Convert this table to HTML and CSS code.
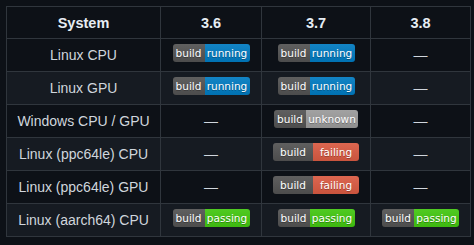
FILE: index.html
```html
<!DOCTYPE html>
<html>
<head>
<meta charset="utf-8">
<link rel="stylesheet" href="styles.css">
</head>
<body>
<table class="matrix">
  <colgroup>
    <col class="c-sys"><col class="c-36"><col class="c-37"><col class="c-38">
  </colgroup>
  <thead>
    <tr><th>System</th><th>3.6</th><th>3.7</th><th>3.8</th></tr>
  </thead>
  <tbody>
    <tr>
      <td>Linux CPU</td>
      <td><span class="badge"><span class="lbl">build</span><span class="val running">running</span></span></td>
      <td><span class="badge"><span class="lbl">build</span><span class="val running">running</span></span></td>
      <td class="dash">—</td>
    </tr>
    <tr>
      <td>Linux GPU</td>
      <td><span class="badge"><span class="lbl">build</span><span class="val running">running</span></span></td>
      <td><span class="badge"><span class="lbl">build</span><span class="val running">running</span></span></td>
      <td class="dash">—</td>
    </tr>
    <tr>
      <td>Windows CPU / GPU</td>
      <td class="dash">—</td>
      <td><span class="badge"><span class="lbl">build</span><span class="val unknown">unknown</span></span></td>
      <td class="dash">—</td>
    </tr>
    <tr>
      <td>Linux (ppc64le) CPU</td>
      <td class="dash">—</td>
      <td><span class="badge wide"><span class="lbl">build</span><span class="val failing">failing</span></span></td>
      <td class="dash">—</td>
    </tr>
    <tr>
      <td>Linux (ppc64le) GPU</td>
      <td class="dash">—</td>
      <td><span class="badge wide"><span class="lbl">build</span><span class="val failing">failing</span></span></td>
      <td class="dash">—</td>
    </tr>
    <tr>
      <td>Linux (aarch64) CPU</td>
      <td><span class="badge"><span class="lbl">build</span><span class="val passing">passing</span></span></td>
      <td><span class="badge"><span class="lbl">build</span><span class="val passing">passing</span></span></td>
      <td><span class="badge"><span class="lbl">build</span><span class="val passing">passing</span></span></td>
    </tr>
  </tbody>
</table>
</body>
</html>
```
FILE: styles.css
```css
html, body {
  margin: 0;
  background: #0d1117;
}
body {
  padding: 6px 4px 0 6px;
  font-family: "Liberation Sans", Arial, sans-serif;
  font-size: 14px;
  color: #d0d6dd;
}
.matrix {
  border-collapse: collapse;
  border-spacing: 0;
  table-layout: fixed;
  width: 464px;
}
.c-sys { width: 154px; }
.c-36 { width: 101px; }
.c-37 { width: 109px; }
.c-38 { width: 100px; }
.matrix th,
.matrix td {
  border: 1px solid #30363d;
  padding: 0;
  text-align: center;
  vertical-align: middle;
  white-space: nowrap;
}
.matrix th {
  height: 31px;
  font-weight: bold;
  font-size: 14.5px;
  color: #e6edf3;
}
.matrix td {
  height: 32px;
}
.matrix tr {
  background: #0d1117;
}
.matrix tbody tr:nth-child(2n) {
  background: #161b22;
}
.dash {
  color: #d0d6dd;
}
.badge {
  display: inline-flex;
  height: 18px;
  border-radius: 3px;
  overflow: hidden;
  vertical-align: middle;
  margin-bottom: 4px;
  font-family: "DejaVu Sans", Verdana, sans-serif;
  font-size: 10.5px;
  line-height: 18px;
  color: #fff;
  text-shadow: 0 1px 0 rgba(1, 1, 1, 0.3);
}
.badge > span {
  display: block;
  text-align: center;
  background-image: linear-gradient(rgba(187, 187, 187, 0.1), rgba(0, 0, 0, 0.1));
}
.lbl {
  width: 32px;
  background-color: #555;
}
.val { width: 45px; }
.running { background-color: #007ec6; }
.unknown { background-color: #9f9f9f; width: 52px; }
.failing { background-color: #e05d44; width: 46px; }
.passing { background-color: #4c1; }
.wide .lbl { width: 40px; }
```
